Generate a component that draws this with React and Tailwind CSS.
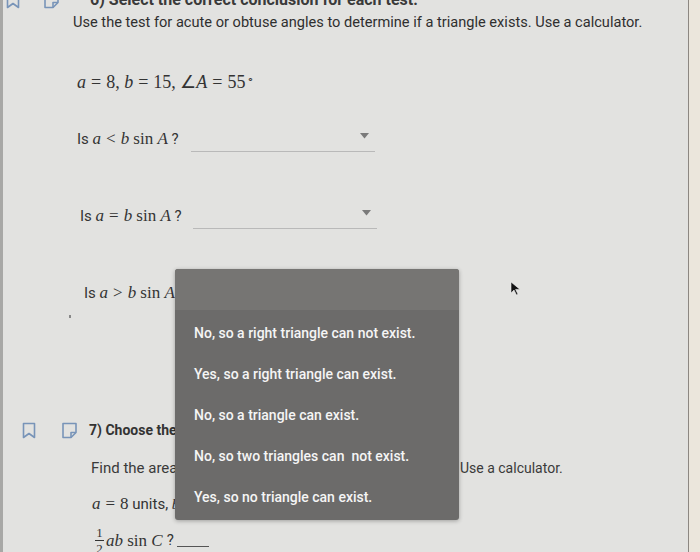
import React from 'react'

const sans = { fontFamily: 'Roboto, "Liberation Sans", sans-serif' }

const Bookmark = () => (
  <svg width="14" height="17" viewBox="0 0 14 17" fill="none" stroke="#7894b8" strokeWidth="1.6">
    <path d="M1.5 1.5h11v14l-5.5-4-5.5 4z" strokeLinejoin="round" />
  </svg>
)

const Note = () => (
  <svg width="17" height="17" viewBox="0 0 17 17" fill="none" stroke="#7894b8" strokeWidth="1.6">
    <path d="M2 1.5h13v9l-5 5H2z" strokeLinejoin="round" />
    <path d="M15 10.5h-5v5" strokeLinejoin="round" />
  </svg>
)

const Caret = () => (
  <svg width="9" height="6" viewBox="0 0 9 6"><path d="M0 0h9L4.5 5.5z" fill="#7a7a7a" /></svg>
)

const V = ({ children }) => <i className="font-['Liberation_Serif',serif]">{children}</i>
const R = ({ children }) => <span className="font-['Liberation_Serif',serif]">{children}</span>
const Rel = ({ children }) => <span className="font-['Liberation_Serif',serif] mx-[5px]">{children}</span>

const Select = () => (
  <div className="w-[184px] h-[26px] border-b border-[#b9b9b9] flex items-start justify-end pt-[7px] pr-[6px]">
    <Caret />
  </div>
)

const options = [
  'No, so a right triangle can not exist.',
  'Yes, so a right triangle can exist.',
  'No, so a triangle can exist.',
  'No, so two triangles can  not exist.',
  'Yes, so no triangle can exist.'
]

export default function App() {
  return (
    <div className="w-[700px] h-[552px] overflow-hidden flex bg-[#ebe6dc] text-[#343434]" style={sans}>
      <div className="w-[3px] bg-[#a8a8a6]" />
      <div className="w-[686px] h-full bg-[#e2e2e0] border-r border-[#8c8782] relative">

        {/* cut-off question 6 header */}
        <div className="flex items-center h-[20px] -mt-[10px]">
          <div className="ml-[3px] w-[14px]"><Bookmark /></div>
          <div className="ml-[23px] w-[17px]"><Note /></div>
          <div className="ml-[30px] text-[16px] font-bold text-[#3a3a3a]">6) Select the correct conclusion for each test.</div>
        </div>

        <div className="ml-[70px] mt-[2px] h-[20px] leading-[20px] text-[14.6px] text-[#2f2f2f] whitespace-nowrap">
          Use the test for acute or obtuse angles to determine if a triangle exists. Use a calculator.
        </div>

        <div className="ml-[74px] mt-[40px] h-[20px] leading-[20px] text-[18px] text-[#333] whitespace-nowrap">
          <V>a</V><Rel>=</Rel><R>8,</R> <V>b</V><Rel>=</Rel><R>15,</R> <R>∠</R><V>A</V><Rel>=</Rel><R>55</R><sup className="text-[11px] ml-[2px] font-['Liberation_Serif',serif]">∘</sup>
        </div>

        <div className="flex items-end ml-[74px] mt-[34px]">
          <div className="h-[20px] leading-[20px] text-[15px] mb-[4px] w-[114px] whitespace-nowrap">
            Is <span className="text-[17px]"><V>a</V><Rel>&lt;</Rel><V>b</V> <R>sin</R> <V>A</V></span> ?
          </div>
          <Select />
        </div>

        <div className="flex items-end ml-[77px] mt-[51px]">
          <div className="h-[20px] leading-[20px] text-[15px] mb-[4px] w-[113px] whitespace-nowrap">
            Is <span className="text-[17px]"><V>a</V><Rel>=</Rel><V>b</V> <R>sin</R> <V>A</V></span> ?
          </div>
          <Select />
        </div>

        <div className="ml-[81px] mt-[53px] h-[20px] leading-[20px] text-[15px] whitespace-nowrap">
          Is <span className="text-[17px]"><V>a</V><Rel>&gt;</Rel><V>b</V> <R>sin</R> <V>A</V></span> ?
        </div>
        <div className="ml-[66px] mt-[13px] w-[2px] h-[3px] bg-[#888]" />

        {/* question 7 */}
        <div className="flex items-center mt-[102px] h-[20px]">
          <div className="ml-[19px] w-[14px]"><Bookmark /></div>
          <div className="ml-[25px] w-[17px]"><Note /></div>
          <div className="ml-[11px] text-[14px] font-bold text-[#333] whitespace-nowrap">7) Choose the correct formula for the area of the triangle.</div>
        </div>

        <div className="flex ml-[88px] mt-[18px] h-[20px] leading-[20px] text-[15px] text-[#3a3a3a] whitespace-nowrap">
          <span className="w-[364px] overflow-hidden">Find the area of the triangle with the given measurements.</span>
          <span className="text-[14px] ml-[5px]">Use a calculator.</span>
        </div>

        <div className="ml-[89px] mt-[15px] h-[20px] leading-[20px] text-[15px] text-[#333] whitespace-nowrap">
          <span className="text-[17px]"><V>a</V><Rel>=</Rel><R>8</R></span> units, <V>b</V> <R>= 10</R> units
        </div>

        <div className="flex items-center ml-[92px] mt-[13px] text-[17px]">
          <div className="flex flex-col items-center leading-none text-[13px] mr-[2px]">
            <R>1</R>
            <div className="w-[9px] border-t border-[#333] my-[1px]" />
            <R>2</R>
          </div>
          <V>ab</V>&nbsp;<R>sin</R>&nbsp;<V>C</V>&nbsp;<span className="text-[15px]">?</span>
          <div className="ml-[3px] w-[32px] border-b border-[#555] self-end mb-[8px]" />
        </div>

        {/* open dropdown menu */}
        <div className="absolute left-[172px] top-[269px] w-[284px] h-[251px] rounded-[3px] bg-[#6c6b6a] shadow-[0_1px_4px_rgba(0,0,0,0.3)] overflow-hidden">
          <div className="h-[41px] bg-[#767573]" />
          <div className="flex flex-col pt-[3px]">
            {options.map((o, i) => (
              <div key={i} className="h-[41px] flex items-center pl-[19px] text-[14px] font-medium text-[#f5f5f5] whitespace-pre">
                {o}
              </div>
            ))}
          </div>
        </div>

        {/* mouse pointer */}
        <svg className="absolute left-[507px] top-[281px]" width="11" height="15" viewBox="0 0 11 15">
          <path d="M1 1v11l3-3 2.5 5 1.5-.8-2.4-4.8H10z" fill="#111" stroke="#eee" strokeWidth="0.6" />
        </svg>
      </div>
    </div>
  )
}
